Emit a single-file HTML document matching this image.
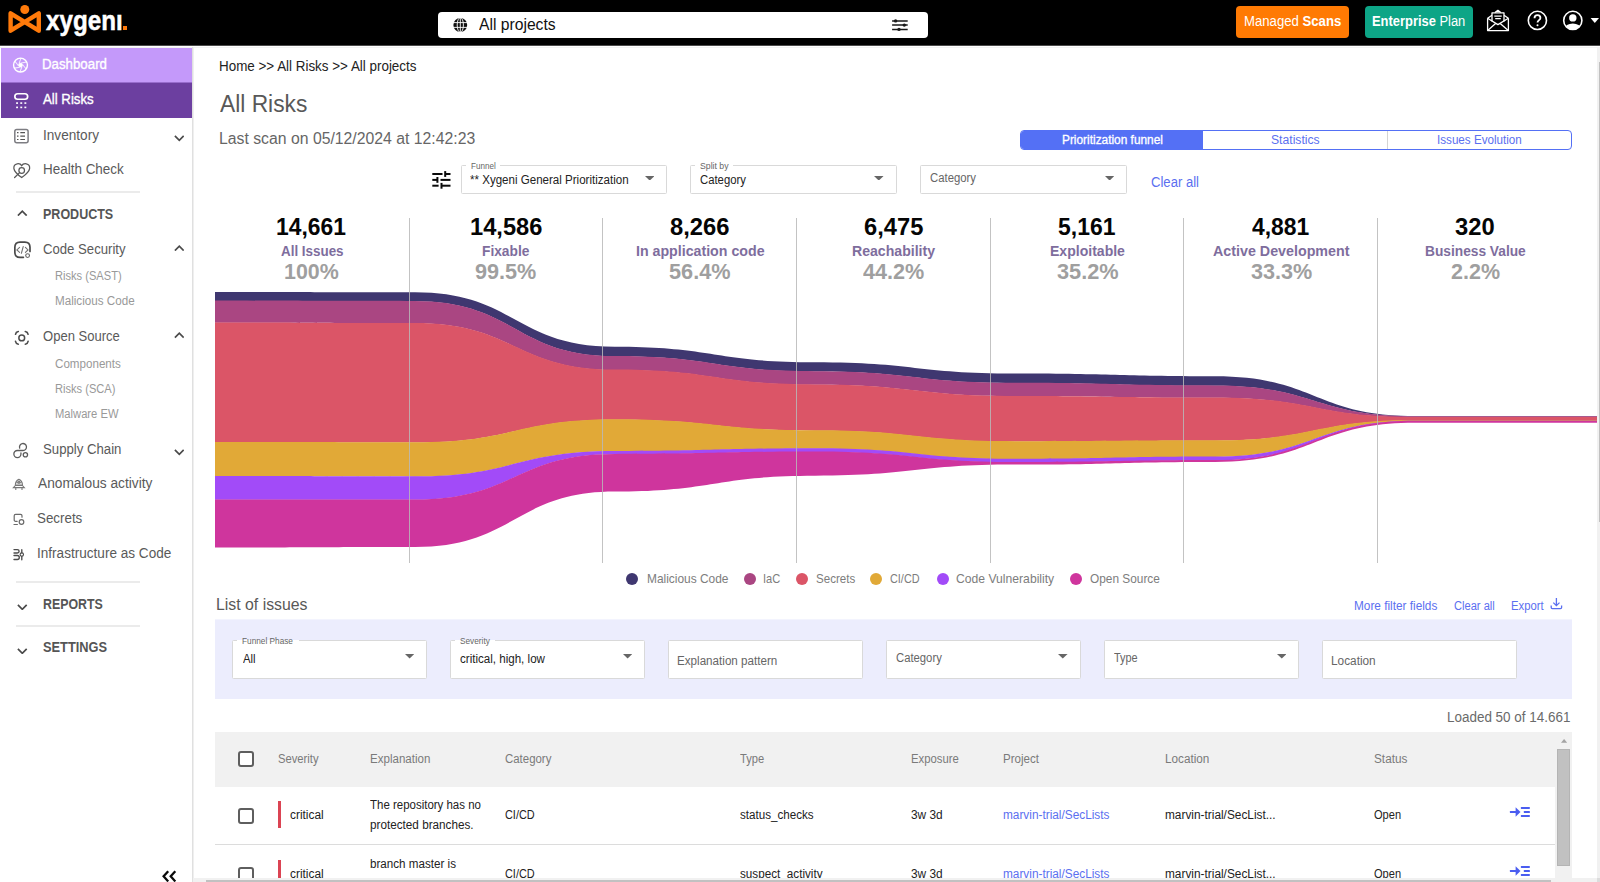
<!DOCTYPE html>
<html lang="en"><head><meta charset="utf-8"><title>Xygeni - All Risks</title>
<style>
*{box-sizing:border-box;margin:0;padding:0}
html,body{width:1600px;height:882px;overflow:hidden;background:#fff}
body{position:relative;font-family:"Liberation Sans", Arial, sans-serif;-webkit-font-smoothing:antialiased}
header,nav,main,section{position:absolute;left:0;top:0;width:0;height:0}
div,svg,.t{position:absolute}
.t{white-space:nowrap;line-height:1;transform-origin:0 0;display:block}
</style></head>
<body>
<header>
<div style="left:0.00px;top:0.00px;width:1600.00px;height:45.00px;background:#000;"></div>
<div style="left:0.00px;top:45.00px;width:1600.00px;height:1.00px;background:#4a4a4a;"></div>
<div style="left:0.00px;top:47.00px;width:1597.00px;height:1.00px;background:#f3f3f3;"></div>
<span class="t" id="t1" style="left:45.72px;top:6px;font-size:28.4px;color:#fff;font-weight:700;transform:scaleX(0.8521);-webkit-text-stroke:0.5px #fff;">xygeni</span>
<div style="left:110.00px;top:2.00px;width:14.00px;height:12.40px;background:#000;"></div>
<div style="left:122.50px;top:25.80px;width:4.50px;height:4.10px;background:#ff7a0a;"></div>
<div style="left:438.00px;top:11.50px;width:490.00px;height:26.50px;background:#fff;border-radius:4px;"></div>
<span class="t" id="t2" style="left:478.59px;top:17px;font-size:16px;color:#111;transform:scaleX(0.9791);">All projects</span>
<div style="left:1236.25px;top:5.60px;width:112.75px;height:32.30px;background:#ff7a03;border-radius:4px;"></div>
<span class="t" id="t3" style="left:1243.61px;top:14px;font-size:14px;color:#fff;transform:scaleX(0.9392);">Managed <b>Scans</b></span>
<div style="left:1365.00px;top:5.60px;width:107.75px;height:32.30px;background:#0da586;border-radius:4px;"></div>
<span class="t" id="t4" style="left:1372.17px;top:14px;font-size:14px;color:#fff;transform:scaleX(0.9221);"><b>Enterprise</b> Plan</span>
<svg style="left:0.00px;top:0.00px;" width="50.00" height="45.00" viewBox="0 0 50 45"><circle cx="24.8" cy="9.45" r="4.5" fill="#ff7a0a"/><path d="M10.6 13.4V30.7L38.8 13.4V30.7Z" fill="none" stroke="#ff7a0a" stroke-width="4.4" stroke-linejoin="round"/></svg>
<svg style="left:452.00px;top:17.00px;" width="17.00" height="17.00" viewBox="0 0 17 17"><circle cx="8.3" cy="8" r="6.9" fill="#111"/><g fill="none" stroke="#fff" stroke-width="0.9"><ellipse cx="8.3" cy="8" rx="3.1" ry="7.4"/><path d="M8.3 0.5V15.5M1 5.6H15.6M1 10.4H15.6"/></g></svg>
<svg style="left:890.00px;top:17.00px;" width="20.00" height="16.00" viewBox="0 0 20 16"><g stroke="#1a1a1a" stroke-width="1.5" fill="#1a1a1a"><path d="M2.1 3.9H17.7M2.1 8.1H17.7M2.1 12.4H17.7" fill="none"/></g><circle cx="5.6" cy="3.9" r="1.7" fill="#1a1a1a"/><circle cx="14.3" cy="8.1" r="1.7" fill="#1a1a1a"/><circle cx="9" cy="12.4" r="1.7" fill="#1a1a1a"/></svg>
<svg style="left:1485.00px;top:8.00px;" width="26.00" height="25.00" viewBox="0 0 26 25"><g fill="none" stroke="#fff" stroke-width="1.3" stroke-linejoin="round"><path d="M2.6 10.3V22.6H23.4V10.3"/><path d="M2.6 10.3L7 7.2M23.4 10.3L19 7.2M10 4.6L12.9 2.3L15.8 4.6"/><path d="M7 13.6V4.9H19V13.6"/><path d="M2.6 10.3L12.9 16.6L23.4 10.3"/><path d="M3 22.3L10.6 15.4M23 22.3L15.2 15.4"/><path d="M9.3 8.1H16.7M10.2 10.7H15.8" stroke-width="1.2"/></g></svg>
<svg style="left:1526.00px;top:9.00px;" width="23.00" height="23.00" viewBox="0 0 23 23"><circle cx="11.4" cy="11.4" r="9.1" fill="none" stroke="#fff" stroke-width="1.6"/><path d="M8.5 9.3C8.5 7.3 9.8 6.2 11.5 6.2C13.2 6.2 14.4 7.3 14.4 8.9C14.4 11 11.5 11.2 11.5 13.6" fill="none" stroke="#fff" stroke-width="1.8"/><circle cx="11.5" cy="16.3" r="1" fill="#fff"/></svg>
<svg style="left:1561.00px;top:9.00px;" width="23.00" height="23.00" viewBox="0 0 23 23"><defs><clipPath id="acc"><circle cx="11.8" cy="11.4" r="9"/></clipPath></defs><circle cx="11.8" cy="11.4" r="9.1" fill="none" stroke="#fff" stroke-width="1.6"/><circle cx="11.8" cy="8.9" r="3.7" fill="#fff"/><ellipse cx="11.8" cy="20.2" rx="8.2" ry="5.8" fill="#fff" clip-path="url(#acc)"/></svg>
<svg style="left:1590.00px;top:17.00px;" width="10.00" height="7.00" viewBox="0 0 10 7"><path d="M0.6 1H9L4.8 5.9Z" fill="#fff"/></svg>
</header>
<nav>
<div style="left:192.00px;top:47.00px;width:1.00px;height:835.00px;background:#e0e0e0;"></div>
<div style="left:193.00px;top:47.00px;width:1.00px;height:835.00px;background:#efefef;"></div>
<div style="left:1.25px;top:47.50px;width:190.75px;height:35.00px;background:#c499fa;"></div>
<div style="left:1.25px;top:82.50px;width:190.75px;height:35.00px;background:#6c3fa0;"></div>
<div style="left:1.25px;top:82.00px;width:190.75px;height:1.00px;background:#986ccd;"></div>
<span class="t" id="t5" style="left:42.47px;top:57px;font-size:14px;color:#fff;transform:scaleX(0.9481);-webkit-text-stroke:0.35px #fff;">Dashboard</span>
<span class="t" id="t6" style="left:43.42px;top:92px;font-size:14px;color:#fff;transform:scaleX(0.9446);-webkit-text-stroke:0.35px #fff;">All Risks</span>
<span class="t" id="t7" style="left:42.72px;top:128px;font-size:14px;color:#5a5a5a;transform:scaleX(0.9723);">Inventory</span>
<span class="t" id="t8" style="left:42.84px;top:162px;font-size:14px;color:#5a5a5a;transform:scaleX(0.9611);">Health Check</span>
<span class="t" id="t9" style="left:42.98px;top:207px;font-size:14px;color:#555;font-weight:700;transform:scaleX(0.8935);">PRODUCTS</span>
<span class="t" id="t10" style="left:43.26px;top:242px;font-size:14px;color:#5a5a5a;transform:scaleX(0.9392);">Code Security</span>
<span class="t" id="t11" style="left:54.81px;top:270px;font-size:12px;color:#999;transform:scaleX(0.9253);">Risks (SAST)</span>
<span class="t" id="t12" style="left:54.82px;top:295px;font-size:12px;color:#999;transform:scaleX(0.9711);">Malicious Code</span>
<span class="t" id="t13" style="left:43.33px;top:329px;font-size:14px;color:#5a5a5a;transform:scaleX(0.9319);">Open Source</span>
<span class="t" id="t14" style="left:55.15px;top:358px;font-size:12px;color:#999;transform:scaleX(0.9680);">Components</span>
<span class="t" id="t15" style="left:54.81px;top:383px;font-size:12px;color:#999;transform:scaleX(0.9256);">Risks (SCA)</span>
<span class="t" id="t16" style="left:54.82px;top:408px;font-size:12px;color:#999;transform:scaleX(0.9332);">Malware EW</span>
<span class="t" id="t17" style="left:42.81px;top:442px;font-size:14px;color:#5a5a5a;transform:scaleX(0.9419);">Supply Chain</span>
<span class="t" id="t18" style="left:37.95px;top:476px;font-size:14px;color:#5a5a5a;transform:scaleX(0.9802);">Anomalous activity</span>
<span class="t" id="t19" style="left:37.26px;top:511px;font-size:14px;color:#5a5a5a;transform:scaleX(0.9546);">Secrets</span>
<span class="t" id="t20" style="left:37.19px;top:546px;font-size:14px;color:#5a5a5a;transform:scaleX(0.9697);">Infrastructure as Code</span>
<span class="t" id="t21" style="left:42.99px;top:597px;font-size:14px;color:#555;font-weight:700;transform:scaleX(0.8835);">REPORTS</span>
<span class="t" id="t22" style="left:42.94px;top:640px;font-size:14px;color:#555;font-weight:700;transform:scaleX(0.9157);">SETTINGS</span>
<div style="left:16.25px;top:191.00px;width:123.75px;height:2.00px;background:#ebebeb;"></div>
<div style="left:16.25px;top:581.00px;width:123.75px;height:2.00px;background:#ebebeb;"></div>
<div style="left:16.25px;top:625.00px;width:123.75px;height:2.00px;background:#ebebeb;"></div>
<svg style="left:173.80px;top:135.00px;" width="10.60" height="6.60" viewBox="0 0 10.6 6.6"><path d="M0.9 0.9L5.3 5.3L9.7 0.9" fill="none" stroke="#4a4a4a" stroke-width="1.7"/></svg>
<svg style="left:17.00px;top:209.60px;" width="10.60" height="6.60" viewBox="0 0 10.6 6.6"><path d="M0.9 5.6L5.3 1.2L9.7 5.6" fill="none" stroke="#4a4a4a" stroke-width="1.7"/></svg>
<svg style="left:173.90px;top:244.70px;" width="10.60" height="6.60" viewBox="0 0 10.6 6.6"><path d="M0.9 5.6L5.3 1.2L9.7 5.6" fill="none" stroke="#4a4a4a" stroke-width="1.7"/></svg>
<svg style="left:173.90px;top:332.10px;" width="10.60" height="6.60" viewBox="0 0 10.6 6.6"><path d="M0.9 5.6L5.3 1.2L9.7 5.6" fill="none" stroke="#4a4a4a" stroke-width="1.7"/></svg>
<svg style="left:173.80px;top:449.30px;" width="10.60" height="6.60" viewBox="0 0 10.6 6.6"><path d="M0.9 0.9L5.3 5.3L9.7 0.9" fill="none" stroke="#4a4a4a" stroke-width="1.7"/></svg>
<svg style="left:17.00px;top:603.80px;" width="10.60" height="6.60" viewBox="0 0 10.6 6.6"><path d="M0.9 0.9L5.3 5.3L9.7 0.9" fill="none" stroke="#4a4a4a" stroke-width="1.7"/></svg>
<svg style="left:17.00px;top:647.50px;" width="10.60" height="6.60" viewBox="0 0 10.6 6.6"><path d="M0.9 0.9L5.3 5.3L9.7 0.9" fill="none" stroke="#4a4a4a" stroke-width="1.7"/></svg>
<svg style="left:11.00px;top:56.00px;" width="20.00" height="18.00" viewBox="0 0 20 18"><g fill="none" stroke="#fff"><circle cx="9.5" cy="9.1" r="6.95" stroke-width="1.4"/><path d="M11.67 8.72L15.26 13.00M10.91 10.79L9.00 16.03M8.75 11.17L3.25 12.14M7.33 9.48L3.74 5.20M8.09 7.41L10.00 2.17M10.25 7.03L15.75 6.06" stroke-width="1.05" opacity="0.8"/></g><path d="M11.67 8.72L10.91 10.79L8.75 11.17L7.33 9.48L8.09 7.41L10.25 7.03Z" fill="#fff" stroke="#fff" stroke-width="0.6"/></svg>
<svg style="left:12.00px;top:91.00px;" width="20.00" height="19.00" viewBox="0 0 20 19"><rect x="2.85" y="2.75" width="12.8" height="5.5" rx="2.75" fill="none" stroke="#fff" stroke-width="1.7"/><g fill="#fff"><rect x="4.1" y="11.3" width="1.9" height="1.6"/><rect x="8.3" y="11.3" width="1.9" height="1.6"/><rect x="12.4" y="11.3" width="1.9" height="1.6"/><rect x="4.1" y="15.6" width="1.9" height="1.6"/><rect x="8.3" y="15.6" width="1.9" height="1.6"/><rect x="12.4" y="15.6" width="1.9" height="1.6"/></g></svg>
<svg style="left:12.00px;top:127.00px;" width="20.00" height="19.00" viewBox="0 0 20 19"><rect x="2.8" y="2.55" width="13.3" height="13.2" rx="2" fill="none" stroke="#7d7d82" stroke-width="1.5"/><g stroke="#555" stroke-width="1.2"><path d="M5 5.6H6.5M8.3 5.6H13M5 9.2H6.5M8.3 9.2H13M5 12.5H6.5M8.3 12.5H13"/></g></svg>
<svg style="left:11.00px;top:161.00px;" width="22.00" height="19.00" viewBox="0 0 22 19"><g fill="none" stroke="#595959" stroke-width="1.25" stroke-linecap="round"><path d="M10.7 4.6C9.6 2.7 7.6 2.6 6.2 2.8C3.9 3.2 2.6 5.2 2.9 7.6C3.3 10.6 6.6 13.6 10.7 16.6C14.8 13.6 18.2 10.6 18.6 7.6C18.9 5.2 17.6 3.2 15.3 2.8C13.9 2.6 11.8 2.7 10.7 4.6Z"/><circle cx="10.7" cy="9.5" r="2.8"/><path d="M8.6 11.6L3.6 16.5"/></g></svg>
<svg style="left:12.00px;top:239.00px;" width="21.00" height="21.00" viewBox="0 0 21 21"><g fill="none" stroke-linecap="round"><path d="M11.4 18.3H8C4.6 18.3 2.85 16.6 2.85 13.2V8.3C2.85 4.9 4.6 3.15 8 3.15H12.9C16.3 3.15 18 4.9 18 8.3V12.5" stroke="#4a4a4a" stroke-width="1.7"/><circle cx="15.6" cy="16.6" r="1.9" stroke="#666" stroke-width="1.1"/><path d="M7.6 8.4L4.9 10.9L7.6 13.3M13.4 8.4L16 10.9L13.4 13.3M11.2 7.6L9.4 14.3" stroke="#707070" stroke-width="1.1"/></g></svg>
<svg style="left:12.00px;top:329.00px;" width="20.00" height="18.00" viewBox="0 0 20 18"><g fill="none" stroke="#4c4c4c" stroke-width="1.6" stroke-linecap="round"><circle cx="9.75" cy="8.9" r="2.9" stroke-width="1.5"/><path d="M3.5 5.3A3.4 3.4 0 0 1 6.3 2.5M13.3 2.5A3.4 3.4 0 0 1 16.1 5.3M16.1 12.4A3.4 3.4 0 0 1 13.3 15.2M6.3 15.2A3.4 3.4 0 0 1 3.5 12.4"/></g></svg>
<svg style="left:11.00px;top:441.00px;" width="21.00" height="19.00" viewBox="0 0 21 19"><g fill="none" stroke="#5c5c5c" stroke-width="1.3" stroke-linecap="round"><path d="M8.7 7.2A3.5 3.5 0 1 1 12 9.5H6.4A3.55 3.55 0 1 0 9.95 13.05V12"/><circle cx="14.4" cy="13.7" r="2.15"/></g></svg>
<svg style="left:11.00px;top:477.00px;" width="16.00" height="15.00" viewBox="0 0 16 15"><g fill="none" stroke="#777" stroke-width="1.05"><path d="M4.3 8.2C4.3 5.3 6 3.2 7.9 2.3C9.8 3.2 11.5 5.3 11.5 8.2"/><path d="M5.2 5.7H10.6M4.5 7.9H11.3"/><circle cx="7.9" cy="5.2" r="1.1"/><path d="M2.4 10.6L4.4 8.4H11.4L13.4 10.6Z"/><path d="M4.8 10.6V12.9M11 10.6V12.9"/></g></svg>
<svg style="left:11.00px;top:512.00px;" width="16.00" height="15.00" viewBox="0 0 16 15"><g fill="none" stroke="#6a6a6a" stroke-width="1.2" stroke-linecap="round"><path d="M6.2 9.3H4.6C3.7 9.3 3.2 8.8 3.2 7.9V3.8C3.2 2.9 3.7 2.4 4.6 2.4H9.6C10.5 2.4 11 2.9 11 3.8V5.2"/><path d="M3 12.5H6.4"/><circle cx="10.5" cy="10" r="2.3"/></g></svg>
<svg style="left:11.00px;top:547.00px;" width="16.00" height="15.00" viewBox="0 0 16 15"><g fill="none" stroke="#4c4c4c" stroke-width="1.35" stroke-linecap="round"><path d="M3 2.6H6.3C7.4 2.6 8.1 3.3 8.1 4.3C8.1 5.3 7.4 6 6.3 6H3"/><path d="M3 8.5H6.3C7.5 8.5 8.3 9.3 8.3 10.5C8.3 11.7 7.5 12.5 6.3 12.5H3"/><path d="M10.8 2.7V5.7M10.8 9.5V12.7"/><circle cx="10.8" cy="7.6" r="1.7" stroke-width="1.1"/></g></svg>
<svg style="left:161.00px;top:869.00px;" width="17.00" height="13.00" viewBox="0 0 17 13"><path d="M7.2 2.2L2.6 7.3L7.2 12.4M14.3 2.2L9.7 7.3L14.3 12.4" fill="none" stroke="#0a0a0a" stroke-width="2.3"/></svg>
<svg style="left:431.00px;top:170.00px;" width="21.00" height="20.00" viewBox="0 0 21 20"><g fill="#0a0a0a"><rect x="1.3" y="3" width="10.2" height="2"/><rect x="13.2" y="1.1" width="2" height="5.8"/><rect x="14.2" y="3" width="5.3" height="2"/><rect x="1.3" y="8.9" width="5.2" height="2"/><rect x="5.4" y="7" width="2" height="5.8"/><rect x="9.5" y="8.9" width="10" height="2"/><rect x="1.3" y="14.7" width="6.3" height="2"/><rect x="9.5" y="12.9" width="2" height="5.8"/><rect x="10.5" y="14.7" width="9" height="2"/></g></svg>
<svg style="left:1550.00px;top:597.00px;" width="13.00" height="13.00" viewBox="0 0 13 13"><g fill="none" stroke="#5b6ff0" stroke-width="1.3"><path d="M6.4 1V8.4M3.3 5.6L6.4 8.6L9.5 5.6"/><path d="M1.2 8.4V10.6C1.2 11.3 1.6 11.7 2.3 11.7H10.5C11.2 11.7 11.6 11.3 11.6 10.6V8.4"/></g></svg>
</nav>
<main>
<section>
<span class="t" id="t23" style="left:219.15px;top:59px;font-size:14px;color:#222;transform:scaleX(0.9576);">Home &gt;&gt; All Risks &gt;&gt; All projects</span>
<span class="t" id="t24" style="left:219.88px;top:93px;font-size:23px;color:#585858;transform:scaleX(0.9902);">All Risks</span>
<span class="t" id="t25" style="left:219.15px;top:131px;font-size:16px;color:#666;transform:scaleX(0.9864);">Last scan on 05/12/2024 at 12:42:23</span>
<div style="left:1020px;top:130px;width:552px;height:20px;border:1px solid #5470f5;border-radius:4px;background:#fff;overflow:hidden"><div style="position:absolute;left:-1px;top:-1px;width:183px;height:20px;background:#5470f5"></div><div style="position:absolute;left:366px;top:0;width:1px;height:18px;background:#d4d4d4"></div></div>
<span class="t" id="t26" style="left:1061.99px;top:134px;font-size:12px;color:#fff;transform:scaleX(0.9893);-webkit-text-stroke:0.3px #fff;">Prioritization funnel</span>
<span class="t" id="t27" style="left:1271.19px;top:134px;font-size:12px;color:#5b6ff0;transform:scaleX(1.0142);">Statistics</span>
<span class="t" id="t28" style="left:1436.56px;top:134px;font-size:12px;color:#5b6ff0;transform:scaleX(0.9704);">Issues Evolution</span>
<div style="left:461px;top:165px;width:206px;height:29px;background:#fff;border:1px solid #d9d9d9;border-radius:1.5px"></div>
<div style="left:466.00px;top:165.00px;width:34.00px;height:1.00px;background:#fff;"></div>
<span class="t" id="t29" style="left:470.71px;top:162px;font-size:9px;color:#666;transform:scaleX(0.8973);">Funnel</span>
<span class="t" id="t30" style="left:470.19px;top:174px;font-size:12px;color:#222;transform:scaleX(0.9626);">** Xygeni General Prioritization</span>
<svg style="left:645.00px;top:175.60px;" width="9.40" height="4.60" viewBox="0 0 9.399999999999977 4.599999999999994"><path d="M0 0H9.40L4.70 4.60Z" fill="#666"/></svg>
<div style="left:690px;top:165px;width:207px;height:29px;background:#fff;border:1px solid #d9d9d9;border-radius:1.5px"></div>
<div style="left:695.00px;top:165.00px;width:38.00px;height:1.00px;background:#fff;"></div>
<span class="t" id="t31" style="left:699.54px;top:162px;font-size:9px;color:#666;transform:scaleX(0.9674);">Split by</span>
<span class="t" id="t32" style="left:699.89px;top:174px;font-size:12px;color:#222;transform:scaleX(0.9423);">Category</span>
<svg style="left:874.40px;top:175.60px;" width="9.60" height="4.60" viewBox="0 0 9.600000000000023 4.599999999999994"><path d="M0 0H9.60L4.80 4.60Z" fill="#666"/></svg>
<div style="left:920px;top:165px;width:207px;height:29px;background:#fff;border:1px solid #d9d9d9;border-radius:1.5px"></div>
<span class="t" id="t33" style="left:929.79px;top:172px;font-size:12px;color:#666;transform:scaleX(0.9443);">Category</span>
<svg style="left:1105.30px;top:175.60px;" width="9.20" height="4.60" viewBox="0 0 9.200000000000045 4.599999999999994"><path d="M0 0H9.20L4.60 4.60Z" fill="#666"/></svg>
<span class="t" id="t34" style="left:1151.18px;top:175px;font-size:14px;color:#5b6ff0;transform:scaleX(0.9344);">Clear all</span>
</section>
<section>
<svg style="left:215.00px;top:280.00px;" width="1382.00" height="280.00" viewBox="0 0 1382 280"><path d="M0.0,12.00C100.0,12.00 100.0,12.30 200.0,12.30C300.0,12.30 300.0,66.70 400.0,66.70C500.0,66.70 500.0,82.30 600.0,82.30C700.0,82.30 700.0,93.60 800.0,93.60C900.0,93.60 900.0,96.30 1000.0,96.30C1100.0,96.30 1100.0,136.10 1200.0,136.10C1300.0,136.10 1300.0,136.10 1400.0,136.10L1400.0,136.55C1300.0,136.55 1300.0,136.55 1200.0,136.55C1100.0,136.55 1100.0,105.75 1000.0,105.75C900.0,105.75 900.0,103.15 800.0,103.15C700.0,103.15 700.0,91.55 600.0,91.55C500.0,91.55 500.0,76.35 400.0,76.35C300.0,76.35 300.0,21.35 200.0,21.35C100.0,21.35 100.0,20.95 0.0,20.95Z" fill="#3f3770"/><path d="M0.0,20.60C100.0,20.60 100.0,21.00 200.0,21.00C300.0,21.00 300.0,76.00 400.0,76.00C500.0,76.00 500.0,91.20 600.0,91.20C700.0,91.20 700.0,102.80 800.0,102.80C900.0,102.80 900.0,105.40 1000.0,105.40C1100.0,105.40 1100.0,136.20 1200.0,136.20C1300.0,136.20 1300.0,136.20 1400.0,136.20L1400.0,137.45C1300.0,137.45 1300.0,137.45 1200.0,137.45C1100.0,137.45 1100.0,117.85 1000.0,117.85C900.0,117.85 900.0,116.25 800.0,116.25C700.0,116.25 700.0,104.75 600.0,104.75C500.0,104.75 500.0,89.95 400.0,89.95C300.0,89.95 300.0,43.35 200.0,43.35C100.0,43.35 100.0,42.75 0.0,42.75Z" fill="#aa4682"/><path d="M0.0,42.40C100.0,42.40 100.0,43.00 200.0,43.00C300.0,43.00 300.0,89.60 400.0,89.60C500.0,89.60 500.0,104.40 600.0,104.40C700.0,104.40 700.0,115.90 800.0,115.90C900.0,115.90 900.0,117.50 1000.0,117.50C1100.0,117.50 1100.0,137.10 1200.0,137.10C1300.0,137.10 1300.0,137.10 1400.0,137.10L1400.0,140.45C1300.0,140.45 1300.0,140.45 1200.0,140.45C1100.0,140.45 1100.0,160.65 1000.0,160.65C900.0,160.65 900.0,161.55 800.0,161.55C700.0,161.55 700.0,150.65 600.0,150.65C500.0,150.65 500.0,139.65 400.0,139.65C300.0,139.65 300.0,162.55 200.0,162.55C100.0,162.55 100.0,162.35 0.0,162.35Z" fill="#db5567"/><path d="M0.0,162.00C100.0,162.00 100.0,162.20 200.0,162.20C300.0,162.20 300.0,139.30 400.0,139.30C500.0,139.30 500.0,150.30 600.0,150.30C700.0,150.30 700.0,161.20 800.0,161.20C900.0,161.20 900.0,160.30 1000.0,160.30C1100.0,160.30 1100.0,140.10 1200.0,140.10C1300.0,140.10 1300.0,140.10 1400.0,140.10L1400.0,141.05C1300.0,141.05 1300.0,141.05 1200.0,141.05C1100.0,141.05 1100.0,176.95 1000.0,176.95C900.0,176.95 900.0,179.15 800.0,179.15C700.0,179.15 700.0,168.65 600.0,168.65C500.0,168.65 500.0,171.35 400.0,171.35C300.0,171.35 300.0,196.65 200.0,196.65C100.0,196.65 100.0,196.35 0.0,196.35Z" fill="#e1a937"/><path d="M0.0,196.00C100.0,196.00 100.0,196.30 200.0,196.30C300.0,196.30 300.0,171.00 400.0,171.00C500.0,171.00 500.0,168.30 600.0,168.30C700.0,168.30 700.0,178.80 800.0,178.80C900.0,178.80 900.0,176.60 1000.0,176.60C1100.0,176.60 1100.0,140.70 1200.0,140.70C1300.0,140.70 1300.0,140.70 1400.0,140.70L1400.0,141.15C1300.0,141.15 1300.0,141.15 1200.0,141.15C1100.0,141.15 1100.0,180.45 1000.0,180.45C900.0,180.45 900.0,182.45 800.0,182.45C700.0,182.45 700.0,171.95 600.0,171.95C500.0,171.95 500.0,174.25 400.0,174.25C300.0,174.25 300.0,219.85 200.0,219.85C100.0,219.85 100.0,219.75 0.0,219.75Z" fill="#a24bf8"/><path d="M0.0,219.40C100.0,219.40 100.0,219.50 200.0,219.50C300.0,219.50 300.0,173.90 400.0,173.90C500.0,173.90 500.0,171.60 600.0,171.60C700.0,171.60 700.0,182.10 800.0,182.10C900.0,182.10 900.0,180.10 1000.0,180.10C1100.0,180.10 1100.0,140.80 1200.0,140.80C1300.0,140.80 1300.0,140.80 1400.0,140.80L1400.0,142.80C1300.0,142.80 1300.0,142.80 1200.0,142.80C1100.0,142.80 1100.0,181.90 1000.0,181.90C900.0,181.90 900.0,184.60 800.0,184.60C700.0,184.60 700.0,195.70 600.0,195.70C500.0,195.70 500.0,211.50 400.0,211.50C300.0,211.50 300.0,267.00 200.0,267.00C100.0,267.00 100.0,267.50 0.0,267.50Z" fill="#cf359d"/></svg>
<div style="left:409.00px;top:218.00px;width:1.00px;height:345.00px;background:rgba(185,185,185,0.85);"></div>
<div style="left:602.00px;top:218.00px;width:1.00px;height:345.00px;background:rgba(185,185,185,0.85);"></div>
<div style="left:796.00px;top:218.00px;width:1.00px;height:345.00px;background:rgba(185,185,185,0.85);"></div>
<div style="left:990.00px;top:218.00px;width:1.00px;height:345.00px;background:rgba(185,185,185,0.85);"></div>
<div style="left:1183.00px;top:218.00px;width:1.00px;height:345.00px;background:rgba(185,185,185,0.85);"></div>
<div style="left:1377.00px;top:218.00px;width:1.00px;height:345.00px;background:rgba(185,185,185,0.85);"></div>
<span class="t" id="t35" style="left:275.93px;top:216px;font-size:23px;color:#050505;font-weight:700;transform:scaleX(0.9933);">14,661</span>
<span class="t" id="t36" style="left:280.54px;top:244px;font-size:14px;color:#7e6d9d;font-weight:700;transform:scaleX(0.9568);">All Issues</span>
<span class="t" id="t37" style="left:284.48px;top:261px;font-size:22px;color:#9f9f9f;font-weight:700;transform:scaleX(0.9725);">100%</span>
<span class="t" id="t38" style="left:470.10px;top:216px;font-size:23px;color:#050505;font-weight:700;transform:scaleX(1.0285);">14,586</span>
<span class="t" id="t39" style="left:481.94px;top:244px;font-size:14px;color:#7e6d9d;font-weight:700;transform:scaleX(0.9819);">Fixable</span>
<span class="t" id="t40" style="left:475.31px;top:261px;font-size:22px;color:#9f9f9f;font-weight:700;transform:scaleX(0.9827);">99.5%</span>
<span class="t" id="t41" style="left:669.90px;top:216px;font-size:23px;color:#050505;font-weight:700;transform:scaleX(1.0345);">8,266</span>
<span class="t" id="t42" style="left:635.64px;top:244px;font-size:14px;color:#7e6d9d;font-weight:700;transform:scaleX(1.0136);">In application code</span>
<span class="t" id="t43" style="left:669.06px;top:261px;font-size:22px;color:#9f9f9f;font-weight:700;transform:scaleX(0.9868);">56.4%</span>
<span class="t" id="t44" style="left:863.77px;top:216px;font-size:23px;color:#050505;font-weight:700;transform:scaleX(1.0305);">6,475</span>
<span class="t" id="t45" style="left:852.13px;top:244px;font-size:14px;color:#7e6d9d;font-weight:700;transform:scaleX(1.0066);">Reachability</span>
<span class="t" id="t46" style="left:863.00px;top:261px;font-size:22px;color:#9f9f9f;font-weight:700;transform:scaleX(0.9828);">44.2%</span>
<span class="t" id="t47" style="left:1057.61px;top:216px;font-size:23px;color:#050505;font-weight:700;transform:scaleX(0.9975);">5,161</span>
<span class="t" id="t48" style="left:1049.93px;top:244px;font-size:14px;color:#7e6d9d;font-weight:700;transform:scaleX(1.0033);">Exploitable</span>
<span class="t" id="t49" style="left:1056.76px;top:261px;font-size:22px;color:#9f9f9f;font-weight:700;transform:scaleX(0.9882);">35.2%</span>
<span class="t" id="t50" style="left:1251.77px;top:216px;font-size:23px;color:#050505;font-weight:700;transform:scaleX(0.9947);">4,881</span>
<span class="t" id="t51" style="left:1212.69px;top:244px;font-size:14px;color:#7e6d9d;font-weight:700;transform:scaleX(1.0199);">Active Development</span>
<span class="t" id="t52" style="left:1250.80px;top:261px;font-size:22px;color:#9f9f9f;font-weight:700;transform:scaleX(0.9825);">33.3%</span>
<span class="t" id="t53" style="left:1455.17px;top:216px;font-size:23px;color:#050505;font-weight:700;transform:scaleX(1.0318);">320</span>
<span class="t" id="t54" style="left:1424.75px;top:244px;font-size:14px;color:#7e6d9d;font-weight:700;transform:scaleX(0.9806);">Business Value</span>
<span class="t" id="t55" style="left:1450.58px;top:261px;font-size:22px;color:#9f9f9f;font-weight:700;transform:scaleX(0.9775);">2.2%</span>
<div style="left:626.00px;top:572.50px;width:12.00px;height:12.00px;background:#3f3770;border-radius:50%;"></div>
<span class="t" id="t56" style="left:646.54px;top:572px;font-size:13px;color:#7d7d7d;transform:scaleX(0.9167);">Malicious Code</span>
<div style="left:744.00px;top:572.50px;width:12.00px;height:12.00px;background:#aa4682;border-radius:50%;"></div>
<span class="t" id="t57" style="left:763.27px;top:572px;font-size:13px;color:#7d7d7d;transform:scaleX(0.8537);">IaC</span>
<div style="left:795.60px;top:572.50px;width:12.00px;height:12.00px;background:#db5567;border-radius:50%;"></div>
<span class="t" id="t58" style="left:815.58px;top:572px;font-size:13px;color:#7d7d7d;transform:scaleX(0.8896);">Secrets</span>
<div style="left:870.30px;top:572.50px;width:12.00px;height:12.00px;background:#e1a937;border-radius:50%;"></div>
<span class="t" id="t59" style="left:890.44px;top:572px;font-size:13px;color:#7d7d7d;transform:scaleX(0.8359);">CI/CD</span>
<div style="left:936.50px;top:572.50px;width:12.00px;height:12.00px;background:#a24bf8;border-radius:50%;"></div>
<span class="t" id="t60" style="left:956.34px;top:572px;font-size:13px;color:#7d7d7d;transform:scaleX(0.9350);">Code Vulnerability</span>
<div style="left:1069.60px;top:572.50px;width:12.00px;height:12.00px;background:#cf359d;border-radius:50%;"></div>
<span class="t" id="t61" style="left:1090.41px;top:572px;font-size:13px;color:#7d7d7d;transform:scaleX(0.9119);">Open Source</span>
</section>
<section>
<span class="t" id="t62" style="left:215.91px;top:597px;font-size:16px;color:#585858;transform:scaleX(0.9895);">List of issues</span>
<span class="t" id="t63" style="left:1354.02px;top:600px;font-size:12px;color:#5b6ff0;transform:scaleX(0.9838);">More filter fields</span>
<span class="t" id="t64" style="left:1454.15px;top:600px;font-size:12px;color:#5b6ff0;transform:scaleX(0.9255);">Clear all</span>
<span class="t" id="t65" style="left:1511.11px;top:600px;font-size:12px;color:#5b6ff0;transform:scaleX(0.9388);">Export</span>
<div style="left:215.00px;top:619.00px;width:1357.00px;height:1.00px;background:#f3f4fe;"></div>
<div style="left:215.00px;top:620.00px;width:1357.00px;height:79.00px;background:#ecedfd;"></div>
<div style="left:232px;top:640px;width:195px;height:39px;background:#fff;border:1px solid #d9d9d9;border-radius:1.5px"></div>
<div style="left:237.00px;top:640.00px;width:62.00px;height:1.00px;background:#fff;"></div>
<span class="t" id="t66" style="left:242.06px;top:637px;font-size:9px;color:#666;transform:scaleX(0.9173);">Funnel Phase</span>
<span class="t" id="t67" style="left:242.53px;top:653px;font-size:12px;color:#222;transform:scaleX(0.9420);">All</span>
<svg style="left:404.70px;top:654.00px;" width="9.30" height="4.50" viewBox="0 0 9.300000000000011 4.5"><path d="M0 0H9.30L4.65 4.50Z" fill="#666"/></svg>
<div style="left:450px;top:640px;width:195px;height:39px;background:#fff;border:1px solid #d9d9d9;border-radius:1.5px"></div>
<div style="left:455.00px;top:640.00px;width:40.00px;height:1.00px;background:#fff;"></div>
<span class="t" id="t68" style="left:459.52px;top:637px;font-size:9px;color:#666;transform:scaleX(0.9173);">Severity</span>
<span class="t" id="t69" style="left:459.94px;top:653px;font-size:12px;color:#222;transform:scaleX(0.9647);">critical, high, low</span>
<svg style="left:622.90px;top:654.00px;" width="9.30" height="4.50" viewBox="0 0 9.300000000000068 4.5"><path d="M0 0H9.30L4.65 4.50Z" fill="#666"/></svg>
<div style="left:668px;top:640px;width:195px;height:39px;background:#fff;border:1px solid #d9d9d9;border-radius:1.5px"></div>
<span class="t" id="t70" style="left:677.37px;top:655px;font-size:12px;color:#666;transform:scaleX(0.9701);">Explanation pattern</span>
<div style="left:886px;top:640px;width:195px;height:39px;background:#fff;border:1px solid #d9d9d9;border-radius:1.5px"></div>
<span class="t" id="t71" style="left:895.99px;top:652px;font-size:12px;color:#666;transform:scaleX(0.9402);">Category</span>
<svg style="left:1058.40px;top:654.00px;" width="9.60" height="4.50" viewBox="0 0 9.599999999999909 4.5"><path d="M0 0H9.60L4.80 4.50Z" fill="#666"/></svg>
<div style="left:1104px;top:640px;width:195px;height:39px;background:#fff;border:1px solid #d9d9d9;border-radius:1.5px"></div>
<span class="t" id="t72" style="left:1113.84px;top:652px;font-size:12px;color:#666;transform:scaleX(0.9069);">Type</span>
<svg style="left:1276.50px;top:654.00px;" width="9.50" height="4.50" viewBox="0 0 9.5 4.5"><path d="M0 0H9.50L4.75 4.50Z" fill="#666"/></svg>
<div style="left:1322px;top:640px;width:195px;height:39px;background:#fff;border:1px solid #d9d9d9;border-radius:1.5px"></div>
<span class="t" id="t73" style="left:1331.04px;top:655px;font-size:12px;color:#666;transform:scaleX(0.9850);">Location</span>
<span class="t" id="t74" style="left:1447.01px;top:710px;font-size:14px;color:#6a6a6a;transform:scaleX(0.9605);">Loaded 50 of 14.661</span>
</section>
<section>
<div style="left:215.00px;top:732.00px;width:1357.00px;height:55.00px;background:#f1f1f1;"></div>
<span class="t" id="t75" style="left:277.76px;top:753px;font-size:12px;color:#7a7a7a;transform:scaleX(0.9364);">Severity</span>
<span class="t" id="t76" style="left:369.58px;top:753px;font-size:12px;color:#7a7a7a;transform:scaleX(0.9624);">Explanation</span>
<span class="t" id="t77" style="left:504.59px;top:753px;font-size:12px;color:#7a7a7a;transform:scaleX(0.9525);">Category</span>
<span class="t" id="t78" style="left:740.44px;top:753px;font-size:12px;color:#7a7a7a;transform:scaleX(0.9300);">Type</span>
<span class="t" id="t79" style="left:911.28px;top:753px;font-size:12px;color:#7a7a7a;transform:scaleX(0.9414);">Exposure</span>
<span class="t" id="t80" style="left:1002.79px;top:753px;font-size:12px;color:#7a7a7a;transform:scaleX(0.9618);">Project</span>
<span class="t" id="t81" style="left:1164.54px;top:753px;font-size:12px;color:#7a7a7a;transform:scaleX(0.9761);">Location</span>
<span class="t" id="t82" style="left:1373.50px;top:753px;font-size:12px;color:#7a7a7a;transform:scaleX(0.9814);">Status</span>
<div style="left:238px;top:751px;width:16px;height:16px;border:2px solid #5e5e5e;border-radius:3px;background:#fff"></div>
<div style="left:238px;top:808px;width:16px;height:16px;border:2px solid #5e5e5e;border-radius:3px;background:#fff"></div>
<div style="left:277.85px;top:801.10px;width:3.20px;height:27.30px;background:#db4453;"></div>
<span class="t" id="t83" style="left:290.14px;top:809px;font-size:12px;color:#222;transform:scaleX(0.9912);">critical</span>
<span class="t" id="t84" style="left:369.93px;top:799px;font-size:12px;color:#222;transform:scaleX(0.9558);">The repository has no</span>
<span class="t" id="t85" style="left:369.79px;top:819px;font-size:12px;color:#222;transform:scaleX(0.9770);">protected branches.</span>
<span class="t" id="t86" style="left:504.67px;top:809px;font-size:12px;color:#222;transform:scaleX(0.9068);">CI/CD</span>
<span class="t" id="t87" style="left:740.19px;top:809px;font-size:12px;color:#222;transform:scaleX(0.9686);">status_checks</span>
<span class="t" id="t88" style="left:911.43px;top:809px;font-size:12px;color:#222;transform:scaleX(0.9894);">3w 3d</span>
<span class="t" id="t89" style="left:1002.93px;top:809px;font-size:12px;color:#5b6ff0;transform:scaleX(0.9857);">marvin-trial/SecLists</span>
<span class="t" id="t90" style="left:1164.73px;top:809px;font-size:12px;color:#222;transform:scaleX(0.9876);">marvin-trial/SecList...</span>
<span class="t" id="t91" style="left:1374.03px;top:809px;font-size:12px;color:#222;transform:scaleX(0.9232);">Open</span>
<svg style="left:1509.00px;top:806.00px;" width="22.00" height="12.00" viewBox="0 0 22 12"><g fill="#4a5df0"><rect x="0.9" y="5.1" width="7" height="1.8" rx="0.5"/><path d="M6.6 1.3L11.5 6L6.6 10.7Z"/><rect x="11.8" y="0.9" width="9.1" height="2" rx="0.6"/><rect x="14.8" y="5" width="6.1" height="2" rx="0.6"/><rect x="11.8" y="8.9" width="9.1" height="2" rx="0.6"/></g></svg>
<div style="left:215.00px;top:844.20px;width:1340.20px;height:1.00px;background:#dcdcdc;"></div>
<div style="left:238px;top:867px;width:16px;height:16px;border:2px solid #5e5e5e;border-radius:3px;background:#fff"></div>
<div style="left:277.85px;top:860.30px;width:3.20px;height:27.30px;background:#db4453;"></div>
<span class="t" id="t92" style="left:290.14px;top:868px;font-size:12px;color:#222;transform:scaleX(0.9912);">critical</span>
<span class="t" id="t93" style="left:369.80px;top:858px;font-size:12px;color:#222;transform:scaleX(0.9689);">branch master is</span>
<span class="t" id="t94" style="left:504.67px;top:868px;font-size:12px;color:#222;transform:scaleX(0.9068);">CI/CD</span>
<span class="t" id="t95" style="left:740.22px;top:868px;font-size:12px;color:#222;transform:scaleX(0.9747);">suspect_activity</span>
<span class="t" id="t96" style="left:911.43px;top:868px;font-size:12px;color:#222;transform:scaleX(0.9894);">3w 3d</span>
<span class="t" id="t97" style="left:1002.93px;top:868px;font-size:12px;color:#5b6ff0;transform:scaleX(0.9857);">marvin-trial/SecLists</span>
<span class="t" id="t98" style="left:1164.73px;top:868px;font-size:12px;color:#222;transform:scaleX(0.9876);">marvin-trial/SecList...</span>
<span class="t" id="t99" style="left:1374.03px;top:868px;font-size:12px;color:#222;transform:scaleX(0.9232);">Open</span>
<svg style="left:1509.00px;top:865.20px;" width="22.00" height="12.00" viewBox="0 0 22 12"><g fill="#4a5df0"><rect x="0.9" y="5.1" width="7" height="1.8" rx="0.5"/><path d="M6.6 1.3L11.5 6L6.6 10.7Z"/><rect x="11.8" y="0.9" width="9.1" height="2" rx="0.6"/><rect x="14.8" y="5" width="6.1" height="2" rx="0.6"/><rect x="11.8" y="8.9" width="9.1" height="2" rx="0.6"/></g></svg>
<div style="left:1555.20px;top:732.20px;width:16.80px;height:146.00px;background:#f1f1f1;"></div>
<div style="left:1557.40px;top:749.00px;width:12.60px;height:116.90px;background:#c1c1c1;box-shadow:inset 0 0 0 1px #b4b4b4;"></div>
<svg style="left:1560.60px;top:739.20px;" width="6.20" height="3.80" viewBox="0 0 6.2 3.8"><path d="M0 3.8L3.1 0L6.2 3.8Z" fill="#a3a3a3"/></svg>
</section>
</main>
<div style="left:193.30px;top:878.00px;width:1404.00px;height:4.00px;background:#f1f1f1;"></div>
<div style="left:206.00px;top:880.10px;width:1344.80px;height:2.00px;background:#c1c1c1;"></div>
<div style="left:1597.00px;top:47.00px;width:3.00px;height:831.00px;background:#f1f1f1;"></div>
<div style="left:1598.90px;top:62.00px;width:1.10px;height:460.00px;background:#c1c1c1;"></div>
<div style="left:1597.00px;top:878.00px;width:3.00px;height:4.00px;background:#dcdcdc;"></div>
</body></html>
